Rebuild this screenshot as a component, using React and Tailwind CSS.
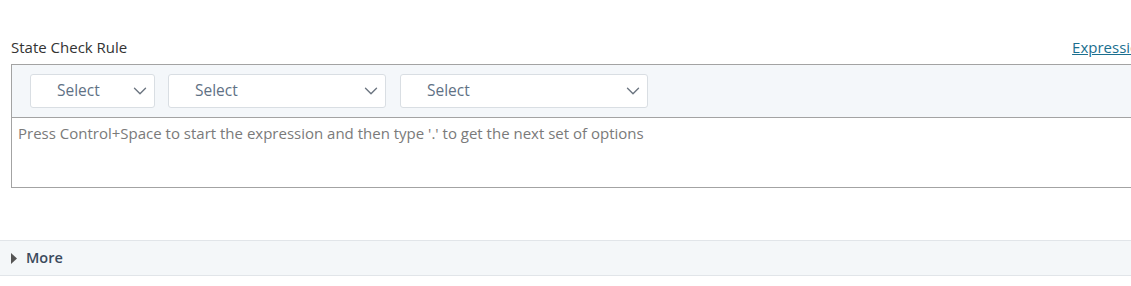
import { ChevronDown } from 'lucide-react';

// one dropdown in the rule toolbar
function SelectBox({ width }) {
  return (
    <div
      className={`${width} h-[34px] flex items-center justify-between bg-white border border-[#d9dee3] rounded-[3px] pl-[26px] pr-[3px]`}
    >
      <span className="text-[15.5px] text-[#5f7185]">Select</span>
      <ChevronDown className="w-[22px] h-[22px] text-[#6b7580]" strokeWidth={1.5} />
    </div>
  );
}

export default function App() {
  return (
    <div className="w-full overflow-hidden bg-white font-['Open_Sans',sans-serif]" style={{ height: 286 }}>
      <div className="w-[1200px] pt-[36px] pl-[11px]">
        {/* header row */}
        <div className="flex items-center justify-between h-[22px] mb-[6px]">
          <span className="text-[15px] text-[#333]">State Check Rule</span>
          <a className="text-[15px] text-[#1b6f8f] underline mr-[6px]" href="#">
            Expression Editor
          </a>
        </div>

        {/* rule panel */}
        <div className="border border-[#a3a3a3]">
          <div className="flex items-center h-[53px] pl-[18px] bg-[#f4f7fa] border-b border-[#a3a3a3]">
            <SelectBox width="w-[125px]" />
            <SelectBox width="w-[218px] ml-[13px]" />
            <SelectBox width="w-[248px] ml-[14px]" />
          </div>
          <div className="h-[69px] px-[6px] pt-[4px] text-[15px] text-[#7a7a7a]">
            Press Control+Space to start the expression and then type '.' to get the next set of options
          </div>
        </div>
      </div>

      {/* collapsible more */}
      <div className="mt-[52px] h-[36px] flex items-center gap-[9px] pl-[11px] bg-[#f4f7f9] border-y border-[#e1e5e9]">
        <svg width="6" height="11" viewBox="0 0 6 11">
          <path d="M0 0 L6 5.5 L0 11 Z" fill="#555" />
        </svg>
        <span className="text-[14.5px] font-semibold text-[#3b4a5c]">More</span>
      </div>
    </div>
  );
}
